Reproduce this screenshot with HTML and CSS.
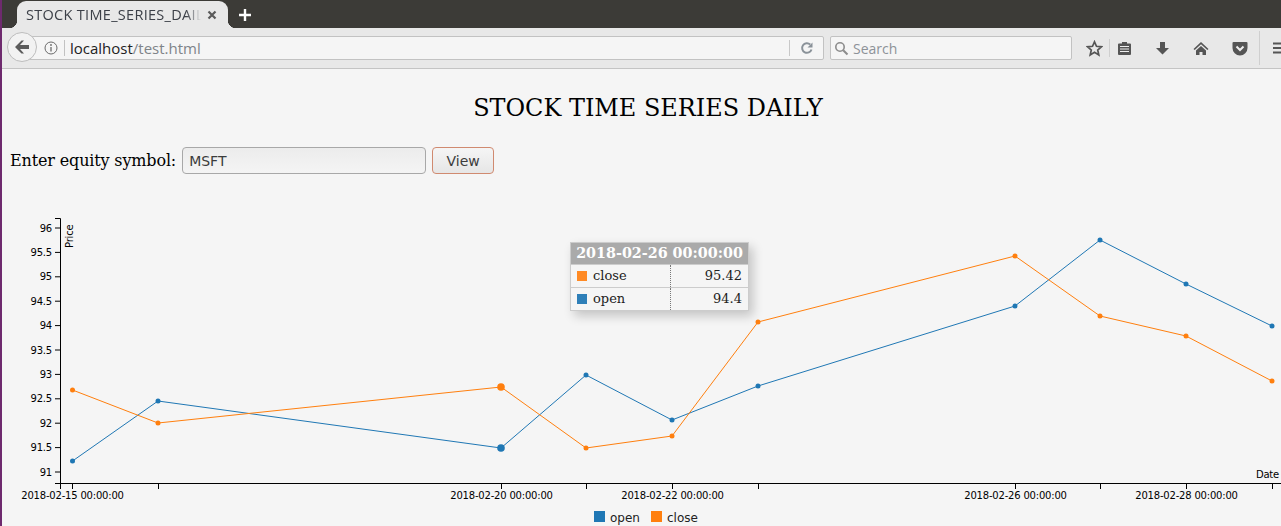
FILE: index.html
```html
<!DOCTYPE html>
<html lang="en">
<head>
    <meta charset="UTF-8">
    <title>STOCK TIME_SERIES_DAILY</title>
    <link rel="stylesheet" href="styles.css">
</head>
<body>
    <div class="tabbar">
        <div class="tab">
            <span class="tab-title">STOCK TIME_SERIES_DAIL</span>
            <svg class="tab-close" width="10" height="10" viewBox="0 0 10 10"><path d="M1.500 1.500l7 7M8.500 1.500l-7 7" stroke="#5a5a5a" stroke-width="2.200"/></svg>
        </div>
        <svg class="new-tab" width="14" height="14" viewBox="0 0 14 14"><path d="M7 1v12M1 7h12" stroke="#fff" stroke-width="2.400"/></svg>
    </div>

    <div class="navbar">
        <div class="back-button">
            <svg width="16" height="16" viewBox="0 0 16 16"><path d="M1 8l6.500-6.500h2.500l-4 4.500h9v4h-9l4 4.500h-2.500z" fill="#5c5c5c"/></svg>
        </div>
        <div class="urlbar">
            <svg class="info-icon" width="14" height="14" viewBox="0 0 14 14"><circle cx="7" cy="7" r="6" fill="none" stroke="#6a6a6a"/><path d="M7 6v4.500" stroke="#6a6a6a" stroke-width="1.300"/><circle cx="7" cy="4" r=".9" fill="#6a6a6a"/></svg>
            <span class="url-sep"></span>
            <span class="url"><span class="url-host">localhost</span>/test.html</span>
            <span class="reload-box">
                <svg width="14" height="14" viewBox="0 0 14 14"><path d="M11.500 8.500a4.800 4.800 0 1 1-1.300-5" fill="none" stroke="#8a9299" stroke-width="2"/><path d="M12.500 1.500v5h-5z" fill="#8a9299"/></svg>
            </span>
        </div>
        <div class="searchbar">
            <svg width="15" height="15" viewBox="0 0 15 15"><circle cx="6" cy="6" r="4.200" fill="none" stroke="#8c8c8c" stroke-width="1.600"/><path d="M9.200 9.200l4.300 4.300" stroke="#8c8c8c" stroke-width="2"/></svg>
            <span>Search</span>
        </div>
        <div class="toolbar-icons">
            <svg class="bookmark-star" width="17" height="17" viewBox="0 0 17 17"><path d="M8.500 1.800l2 4.500 4.900.5-3.700 3.200 1.100 4.900-4.300-2.600-4.300 2.600 1.100-4.900L1.600 6.800l4.900-.5z" fill="none" stroke="#555" stroke-width="1.700"/></svg>
            <span class="icon-sep"></span>
            <svg class="icon-list" width="15" height="15" viewBox="0 0 15 15"><path d="M1 3.500a1 1 0 0 1 1-1h3v-1.500h5v1.500h3a1 1 0 0 1 1 1v9.500a1 1 0 0 1-1 1H2a1 1 0 0 1-1-1z" fill="#555"/><path d="M3 5.500h9M3 8h9M3 10.500h9" stroke="#eee" stroke-width="1.100"/></svg>
            <svg class="icon-down" width="15" height="15" viewBox="0 0 15 15"><path d="M5 1h5v6h4l-6.500 6.500L1 7h4z" fill="#555"/></svg>
            <svg class="icon-home" width="16" height="15" viewBox="0 0 16 15"><path d="M8 1L.5 8l1.200 1L8 3.300 14.300 9l1.200-1z" fill="#555"/><path d="M8 5l-5 4.500V14h3.500v-3h3v3H13V9.500z" fill="#555"/></svg>
            <svg class="icon-pocket" width="16" height="15" viewBox="0 0 16 15"><path d="M1.500 1h13a1 1 0 0 1 1 1v5a7.500 7.500 0 0 1-15 0V2a1 1 0 0 1 1-1z" fill="#555"/><path d="M4.500 5.500L8 9l3.500-3.500" fill="none" stroke="#eee" stroke-width="2"/></svg>
            <span class="icon-sep tall"></span>
            <svg class="icon-menu" width="14" height="14" viewBox="0 0 14 14"><path d="M0 2.500h14M0 7h14M0 11.500h14" stroke="#555" stroke-width="2"/></svg>
        </div>
    </div>

    <div class="page">
        <h1>STOCK TIME SERIES DAILY</h1>
        <div class="symbol-form">
            <label for="symbol">Enter equity symbol:</label>
            <input id="symbol" type="text" value="MSFT">
            <button type="button">View</button>
        </div>

        <div class="chart">
            <svg id="chart-svg" width="1279" height="316" viewBox="2 210 1279 316"></svg>
            <div class="chart-tooltip">
                <div class="tooltip-head">2018-02-26 00:00:00</div>
                <div class="tooltip-row">
                    <span class="tooltip-name"><i class="swatch close"></i>close</span>
                    <span class="tooltip-value">95.42</span>
                </div>
                <div class="tooltip-row">
                    <span class="tooltip-name"><i class="swatch open"></i>open</span>
                    <span class="tooltip-value">94.4</span>
                </div>
            </div>
        </div>
    </div>

    <script>
        // chart data, page coordinates
        const xs = [72.5, 158, 501, 586, 672, 758, 1015, 1100, 1186, 1272];
        const open = [461, 401, 448, 375, 420, 386, 306, 240, 284, 326];
        const close = [390, 423, 387, 448, 436, 322, 256, 316, 336, 381];
        const xTicks = { 0: '2018-02-15 00:00:00', 2: '2018-02-20 00:00:00', 4: '2018-02-22 00:00:00', 6: '2018-02-26 00:00:00', 8: '2018-02-28 00:00:00' };
        const yTicks = ['91', '91.5', '92', '92.5', '93', '93.5', '94', '94.5', '95', '95.5', '96'];

        let out = '';

        // y axis
        out += '<path class="axis" d="M55 218.500H60.500V483.500H55"/>';
        yTicks.forEach((label, i) => {
            const y = 472 - i * 24.4;
            out += `<path class="axis" d="M55 ${y}H60"/>`;
            out += `<text class="tick" x="52" y="${y + 3.500}" text-anchor="end">${label}</text>`;
        });
        out += '<text class="tick" transform="translate(73 248) rotate(-90)">Price</text>';

        // x axis
        out += '<path class="axis" d="M60 483.500H1281"/>';
        out += '<path class="axis" d="M60.500 483V489"/>';
        xs.forEach((x, i) => {
            const px = Math.floor(x) + 0.5;
            out += `<path class="axis" d="M${px} 483V489"/>`;
            if (xTicks[i]) out += `<text class="tick" x="${px}" y="499" text-anchor="middle">${xTicks[i]}</text>`;
        });
        out += '<text class="tick" x="1279" y="478" text-anchor="end">Date</text>';

        // series
        const series = (ys, color) => {
            out += `<polyline fill="none" stroke="${color}" points="${xs.map((x, i) => x + ',' + ys[i]).join(' ')}"/>`;
            xs.forEach((x, i) => {
                out += `<circle cx="${x}" cy="${ys[i]}" r="${i === 2 ? 3.800 : 2.500}" fill="${color}"/>`;
            });
        };
        series(open, '#1f77b4');
        series(close, '#ff7f0e');

        // legend
        out += '<rect x="594" y="511" width="11" height="11" fill="#1f77b4"/>';
        out += '<text class="legend" x="610" y="522">open</text>';
        out += '<rect x="651" y="511" width="11" height="11" fill="#ff7f0e"/>';
        out += '<text class="legend" x="667" y="522">close</text>';

        document.getElementById('chart-svg').innerHTML = out;
    </script>
</body>
</html>
```

FILE: styles.css
```css
html, body {
    height: 100%;
}

body {
    margin: 0;
    background: #f5f5f5;
    border-left: 2px solid #6e2a6e;
    overflow: hidden;
    font-family: "DejaVu Serif", serif;
    color: #000;
}

/* Tab strip */
.tabbar {
    height: 28px;
    background: #3c3b37;
    display: flex;
    align-items: flex-end;
    box-sizing: border-box;
    padding-left: 15px;
}

.tab {
    position: relative;
    width: 211px;
    height: 27px;
    background: #e8e8e8;
    border-radius: 9px 9px 0 0;
    display: flex;
    align-items: center;
    padding-left: 9px;
    box-sizing: border-box;
}

.tab::before,
.tab::after {
    content: "";
    position: absolute;
    bottom: 0;
    width: 8px;
    height: 8px;
}

.tab::before {
    left: -8px;
    background: radial-gradient(circle at 0 0, transparent 8px, #e8e8e8 8.500px);
}

.tab::after {
    right: -8px;
    background: radial-gradient(circle at 100% 0, transparent 8px, #e8e8e8 8.500px);
}

.tab-title {
    width: 175px;
    white-space: nowrap;
    font: 14.500px "Open Sans", sans-serif;
    letter-spacing: 0.3px;
    color: #3c4048;
    -webkit-mask-image: linear-gradient(to right, #000 160px, transparent 175px);
    mask-image: linear-gradient(to right, #000 160px, transparent 175px);
}

.tab-close {
    margin-left: 6px;
}

.new-tab {
    margin: 0 0 6px 10px;
}

/* Navigation bar */
.navbar {
    height: 40px;
    background: #e8e8e8;
    border-bottom: 1px solid #c4c4c4;
    display: flex;
    align-items: center;
    position: relative;
}

.back-button {
    position: absolute;
    left: 5px;
    top: 4px;
    width: 30px;
    height: 30px;
    box-sizing: border-box;
    border: 1px solid #bdbdbd;
    border-radius: 50%;
    background: #f2f2f2;
    display: flex;
    align-items: center;
    justify-content: center;
    z-index: 1;
}

.urlbar {
    flex: none;
    margin-left: 20px;
    width: 802px;
    height: 24px;
    box-sizing: border-box;
    background: #f5f5f5;
    border: 1px solid #c2c2c2;
    border-radius: 0 2px 2px 0;
    display: flex;
    align-items: center;
    padding-left: 21px;
}

.url-sep {
    width: 1px;
    height: 16px;
    background: #c2c2c2;
    margin: 0 5px 0 6px;
}

.url {
    font: 15px "Open Sans", sans-serif;
    color: #7f8489;
    flex: 1;
}

.url-host {
    color: #222;
}

.reload-box {
    width: 33px;
    height: 16px;
    border-left: 1px solid #c8c8c8;
    display: flex;
    align-items: center;
    justify-content: center;
}

.searchbar {
    flex: none;
    margin-left: 6px;
    width: 242px;
    height: 24px;
    box-sizing: border-box;
    background: #f5f5f5;
    border: 1px solid #c2c2c2;
    border-radius: 2px;
    display: flex;
    align-items: center;
    gap: 4px;
    padding-left: 3px;
    font: 14px "Open Sans", sans-serif;
    color: #8d9298;
}

.toolbar-icons {
    flex: none;
    display: flex;
    align-items: center;
    margin-left: 14px;
}

.icon-sep {
    width: 1px;
    height: 18px;
    background: #cfcfcf;
    margin: 0 7px 0 6px;
}

.icon-sep.tall {
    height: 34px;
    margin: 0 13px 0 11px;
}

.icon-down,
.icon-home,
.icon-pocket {
    margin-left: 23px;
}

/* Page content */
.page {
    position: relative;
}

h1 {
    margin: 0;
    padding: 25px 0 0 13px;
    text-align: center;
    font-size: 23.950px;
    line-height: 28px;
    font-weight: normal;
}

.symbol-form {
    display: flex;
    align-items: center;
    margin-top: 25px;
    padding-left: 8px;
    font-size: 16px;
}

.symbol-form label {
    letter-spacing: -0.15px;
}

.symbol-form input {
    margin-left: 6px;
    width: 244px;
    height: 27px;
    box-sizing: border-box;
    border: 1px solid #a8a8a8;
    border-radius: 4px;
    background: linear-gradient(to bottom, #ececec, #f4f4f4);
    padding: 0 6px;
    font: 14px "DejaVu Sans", sans-serif;
    color: #3c3c3c;
}

.symbol-form button {
    margin-left: 6px;
    width: 62px;
    height: 27px;
    box-sizing: border-box;
    border: 1px solid #d08a70;
    border-radius: 4px;
    background: linear-gradient(to bottom, #f5f5f5, #e6e6e6);
    font: 14px "DejaVu Sans", sans-serif;
    color: #3c3c3c;
}

/* Chart */
.chart {
    position: relative;
    margin-top: 36px;
}

#chart-svg {
    display: block;
}

.axis {
    fill: none;
    stroke: #000;
}

.tick {
    font: 10px "DejaVu Sans", sans-serif;
    letter-spacing: -0.2px;
    fill: #000;
}

.legend {
    font: 12px "DejaVu Sans", sans-serif;
    fill: #222;
}

.chart-tooltip {
    position: absolute;
    left: 568px;
    top: 32px;
    width: 179px;
    box-sizing: border-box;
    background: #f5f5f5;
    border: 1px solid #ccc;
    box-shadow: 4px 5px 10px rgba(0, 0, 0, 0.2);
    font-size: 13px;
    color: #222;
}

.tooltip-head {
    background: #aaa;
    color: #fff;
    font-size: 14.300px;
    font-weight: bold;
    text-align: center;
    line-height: 21px;
    white-space: nowrap;
}

.tooltip-row {
    display: flex;
    height: 23px;
    line-height: 22px;
    box-sizing: border-box;
    border-top: 1px solid #ccc;
}

.tooltip-name {
    width: 100px;
    box-sizing: border-box;
    padding-left: 6px;
    border-right: 1px dotted #777;
    display: flex;
    align-items: center;
}

.tooltip-value {
    flex: 1;
    text-align: right;
    padding-right: 6px;
}

.swatch {
    width: 10px;
    height: 10px;
    margin-right: 6px;
}

.swatch.close {
    background: #ff8a24;
}

.swatch.open {
    background: #2e7fb8;
}
```
